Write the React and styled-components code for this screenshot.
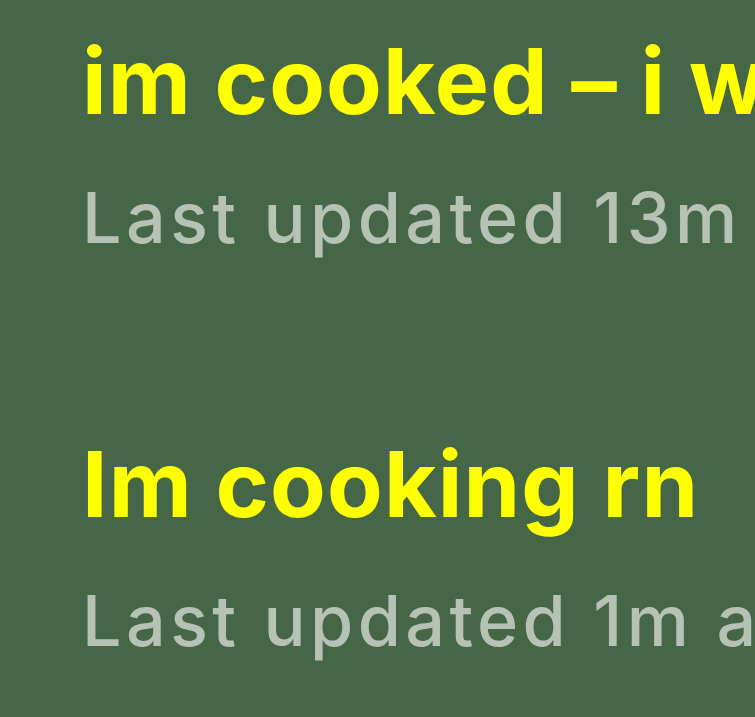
import React from "react";
import styled, { createGlobalStyle } from "styled-components";

const GlobalStyle = createGlobalStyle`
  html, body {
    margin: 0;
    padding: 0;
    background: #456748;
    overflow: hidden;
  }
`;

const Page = styled.div`
  width: 755px;
  height: 717px;
  overflow: hidden;
  background: #456748;
  padding: 27px 0 0 82px;
  box-sizing: border-box;
  display: flex;
  flex-direction: column;
  gap: 170px;
  font-family: Inter, "Noto Sans", sans-serif;
`;

const Item = styled.div`
  display: flex;
  flex-direction: column;
  gap: 40px;
  white-space: nowrap;
`;

const Title = styled.div`
  color: #ffff00;
  font-size: 91px;
  font-weight: 700;
  line-height: 1.2;
  letter-spacing: 1.1px;
`;

const Updated = styled.div`
  color: #b6c2b4;
  font-size: 70px;
  font-weight: 500;
  line-height: 1.2;
  letter-spacing: 4.4px;
`;

const notes = [
  { title: "im cooked – i wanna go home", updated: "Last updated 13m ago" },
  { title: "Im cooking rn", updated: "Last updated 1m ago" },
];

const App = () => (
  <>
    <GlobalStyle />
    <Page>
      {notes.map((n, i) => (
        <Item key={i}>
          <Title>{n.title}</Title>
          <Updated>{n.updated}</Updated>
        </Item>
      ))}
    </Page>
  </>
);

export default App;
